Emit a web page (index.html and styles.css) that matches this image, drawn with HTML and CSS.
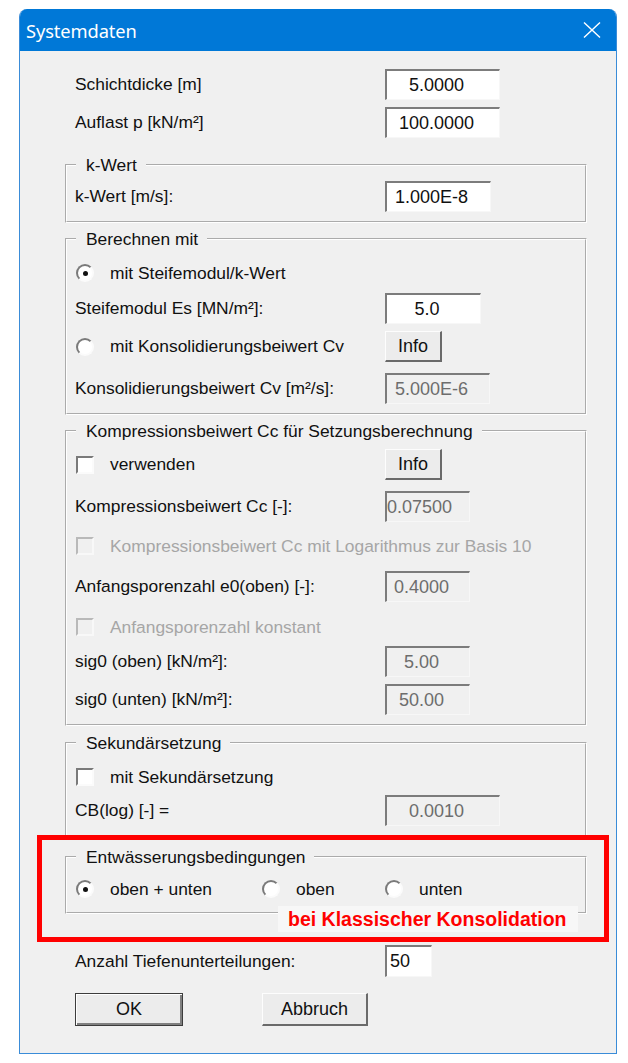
FILE: index.html
```html
<!DOCTYPE html>
<html lang="de">
<head>
<meta charset="utf-8">
<title>Systemdaten</title>
<link rel="stylesheet" href="styles.css">
</head>
<body>
<div class="window">
  <div class="titlebar">
    <span class="title">Systemdaten</span>
    <svg class="close" width="18" height="16" viewBox="0 0 18 16"><path d="M1 0.5L17 15.5M17 0.5L1 15.5" stroke="#fff" stroke-width="1.4" fill="none"/></svg>
  </div>
  <div class="content">
    <div class="row top first">
      <span class="lbl">Schichtdicke [m]</span>
      <span class="edit w115 c">5.0000</span>
    </div>
    <div class="row top mt7">
      <span class="lbl">Auflast p [kN/m²]</span>
      <span class="edit w115 c">100.0000</span>
    </div>

    <fieldset class="group mt17">
      <legend>k-Wert</legend>
      <div class="row mt6">
        <span class="lbl">k-Wert [m/s]:</span>
        <span class="edit w106 l8">1.000E-8</span>
      </div>
    </fieldset>

    <fieldset class="group mt6">
      <legend>Berechnen mit</legend>
      <div class="row opt-row mt12">
        <span class="lbl choice"><span class="radio on"></span>mit Steifemodul/k-Wert</span>
      </div>
      <div class="row mt8">
        <span class="lbl">Steifemodul Es [MN/m²]:</span>
        <span class="edit w96 c">5.0</span>
      </div>
      <div class="row mt7">
        <span class="lbl choice"><span class="radio"></span>mit Konsolidierungsbeiwert Cv</span>
        <span class="btn w57">Info</span>
      </div>
      <div class="row mt11">
        <span class="lbl">Konsolidierungsbeiwert Cv [m²/s]:</span>
        <span class="edit dis w105 l8">5.000E-6</span>
      </div>
    </fieldset>

    <fieldset class="group mt6">
      <legend>Kompressionsbeiwert Cc für Setzungsberechnung</legend>
      <div class="row mt8">
        <span class="lbl choice"><span class="check"></span>verwenden</span>
        <span class="btn w57">Info</span>
      </div>
      <div class="row mt11">
        <span class="lbl">Kompressionsbeiwert Cc [-]:</span>
        <span class="edit dis w85 l0">0.07500</span>
      </div>
      <div class="row opt-row mt12">
        <span class="choice off"><span class="check off"></span>Kompressionsbeiwert Cc mit Logarithmus zur Basis 10</span>
      </div>
      <div class="row mt13">
        <span class="lbl">Anfangsporenzahl e0(oben) [-]:</span>
        <span class="edit dis w85 c">0.4000</span>
      </div>
      <div class="row opt-row mt13">
        <span class="choice off"><span class="check off"></span>Anfangsporenzahl konstant</span>
      </div>
      <div class="row mt7">
        <span class="lbl">sig0 (oben) [kN/m²]:</span>
        <span class="edit dis w85 c">5.00</span>
      </div>
      <div class="row mt7">
        <span class="lbl">sig0 (unten) [kN/m²]:</span>
        <span class="edit dis w85 c">50.00</span>
      </div>
    </fieldset>

    <fieldset class="group mt7">
      <legend>Sekundärsetzung</legend>
      <div class="row opt-row mt12">
        <span class="lbl choice"><span class="check"></span>mit Sekundärsetzung</span>
      </div>
      <div class="row mt6">
        <span class="lbl">CB(log) [-] =</span>
        <span class="edit dis w115 c">0.0010</span>
      </div>
    </fieldset>

    <fieldset class="group mt10 pb11">
      <legend>Entwässerungsbedingungen</legend>
      <div class="row opt-row mt10">
        <span class="choice o1"><span class="radio on"></span>oben + unten</span>
        <span class="choice o2"><span class="radio"></span>oben</span>
        <span class="choice o3"><span class="radio"></span>unten</span>
      </div>
    </fieldset>

    <div class="row top tall mt31">
      <span class="lbl">Anzahl Tiefenunterteilungen:</span>
      <span class="edit w47 l3 h32">50</span>
    </div>

    <div class="row top buttons mt16">
      <span class="btn default w108">OK</span>
      <span class="btn w106b">Abbruch</span>
    </div>
  </div>
</div>
<div class="mark"></div>
<div class="note">bei Klassischer Konsolidation</div>
</body>
</html>
```
FILE: styles.css
```css
html, body {
  margin: 0;
  padding: 0;
  background: #ffffff;
}
body {
  position: relative;
  width: 628px;
  height: 1063px;
  overflow: hidden;
  font-family: "Liberation Sans", Arial, sans-serif;
  font-size: 17.4px;
  color: #111;
}
.window {
  margin: 9px 0 0 19px;
  width: 598px;
  box-sizing: border-box;
  border: 1px solid #3a8cd8;
  border-top: none;
  border-radius: 8px 8px 0 0;
  background: #f0f0f0;
  overflow: hidden;
}
.titlebar {
  height: 42px;
  background: #0078d7;
  display: flex;
  align-items: center;
  justify-content: space-between;
  padding: 0 15px 0 6px;
}
.title {
  font-family: "Noto Sans", "Open Sans", sans-serif;
  font-size: 18.3px;
  color: #fff;
  letter-spacing: -0.1px;
}
.close {
  display: block;
}
.content {
  padding: 0 0 27px 45px;
}
.row {
  display: flex;
  align-items: center;
  height: 31px;
}
.row.opt-row {
  height: 24px;
}
.row.tall {
  height: 32px;
}
.row.buttons {
  height: 33px;
}
.row.top {
  margin-left: 10px;
}
.first { margin-top: 18px; }
.mt6 { margin-top: 6px; }
.mt7 { margin-top: 7px; }
.mt8 { margin-top: 8px; }
.mt10 { margin-top: 10px; }
.mt11 { margin-top: 11px; }
.mt12 { margin-top: 12px; }
.mt13 { margin-top: 13px; }
.mt16 { margin-top: 16px; }
.mt17 { margin-top: 17px; }
.mt31 { margin-top: 31px; }

.lbl {
  flex: 0 0 310px;
  white-space: nowrap;
}
.choice {
  display: flex;
  align-items: center;
  white-space: nowrap;
}
.choice.off {
  color: #a6a6a6;
}
.o1 { width: 187px; flex: none; }
.o2 { width: 123px; flex: none; margin-left: -1px; }
.o3 { flex: none; }

.radio {
  box-sizing: border-box;
  width: 18px;
  height: 18px;
  margin: 0 16px 0 1px;
  border-radius: 50%;
  border: 2px solid;
  border-color: #7a7a7a #fbfbfb #fbfbfb #7a7a7a;
  background: #fff;
  display: flex;
  align-items: center;
  justify-content: center;
  flex: none;
}
.radio.on::after {
  content: "";
  width: 5px;
  height: 5px;
  border-radius: 50%;
  background: #111;
}
.check {
  box-sizing: border-box;
  width: 18px;
  height: 18px;
  margin: 0 16px 0 1px;
  border: 2px solid;
  border-color: #7a7a7a #fbfbfb #fbfbfb #7a7a7a;
  background: #fff;
  flex: none;
}
.check.off {
  border-color: #b9b9b9 #f8f8f8 #f8f8f8 #b9b9b9;
  background: #f0f0f0;
}

.group {
  margin-left: 0;
  margin-right: 0;
  margin-bottom: 0;
  width: 522px;
  box-sizing: border-box;
  min-width: 0;
  border: 2px groove #ffffff;
  padding: 0 8px 9px 8px;
}
.group.pb11 {
  padding-bottom: 11px;
}
.group legend {
  margin-left: 1px;
  padding: 0 9px 0 10px;
  height: 20px;
  line-height: 20px;
  font-size: 17.4px;
  white-space: nowrap;
}

.edit {
  display: block;
  box-sizing: border-box;
  height: 31px;
  background: #fff;
  border-style: solid;
  border-width: 2px 1px 1px 2px;
  border-color: #7c7c7c #f7f7f7 #f7f7f7 #7c7c7c;
  line-height: 28px;
  font-size: 18px;
  white-space: nowrap;
  color: #111;
  flex: none;
}
.edit.h32 { height: 32px; line-height: 29px; }
.edit.dis {
  background: #f0f0f0;
  color: #6d6d6d;
}
.w115 { width: 115px; }
.w106 { width: 106px; }
.w105 { width: 105px; }
.w96 { width: 96px; }
.w85 { width: 85px; }
.w47 { width: 47px; }
.c { text-align: center; padding-right: 13px; }
.l8 { padding-left: 8px; }
.l0 { padding-left: 0; }
.l3 { padding-left: 3px; }

.btn {
  box-sizing: border-box;
  height: 31px;
  display: flex;
  align-items: center;
  justify-content: center;
  background: #ececec;
  border-style: solid;
  border-width: 1px 2px 2px 1px;
  border-color: #fdfdfd #6a6a6a #6a6a6a #fdfdfd;
  color: #111;
  font-size: 18px;
  flex: none;
}
.w57 { width: 57px; }
.buttons .btn {
  height: 33px;
}
.btn.default {
  border: 1px solid #3c3c3c;
  box-shadow: inset 1px 1px 0 #fff, inset -2px -2px 0 #808080;
}
.w108 { width: 108px; }
.w106b { width: 106px; margin-left: 79px; }

.mark {
  position: absolute;
  left: 37px;
  top: 835px;
  width: 572px;
  height: 107px;
  box-sizing: border-box;
  border: 5px solid #ff0000;
}
.note {
  position: absolute;
  left: 278px;
  top: 906px;
  width: 300px;
  height: 26px;
  box-sizing: border-box;
  padding-left: 10px;
  background: #f7f7f7;
  color: #ff0000;
  font-weight: bold;
  font-size: 19.5px;
  line-height: 26px;
  white-space: nowrap;
}
```
